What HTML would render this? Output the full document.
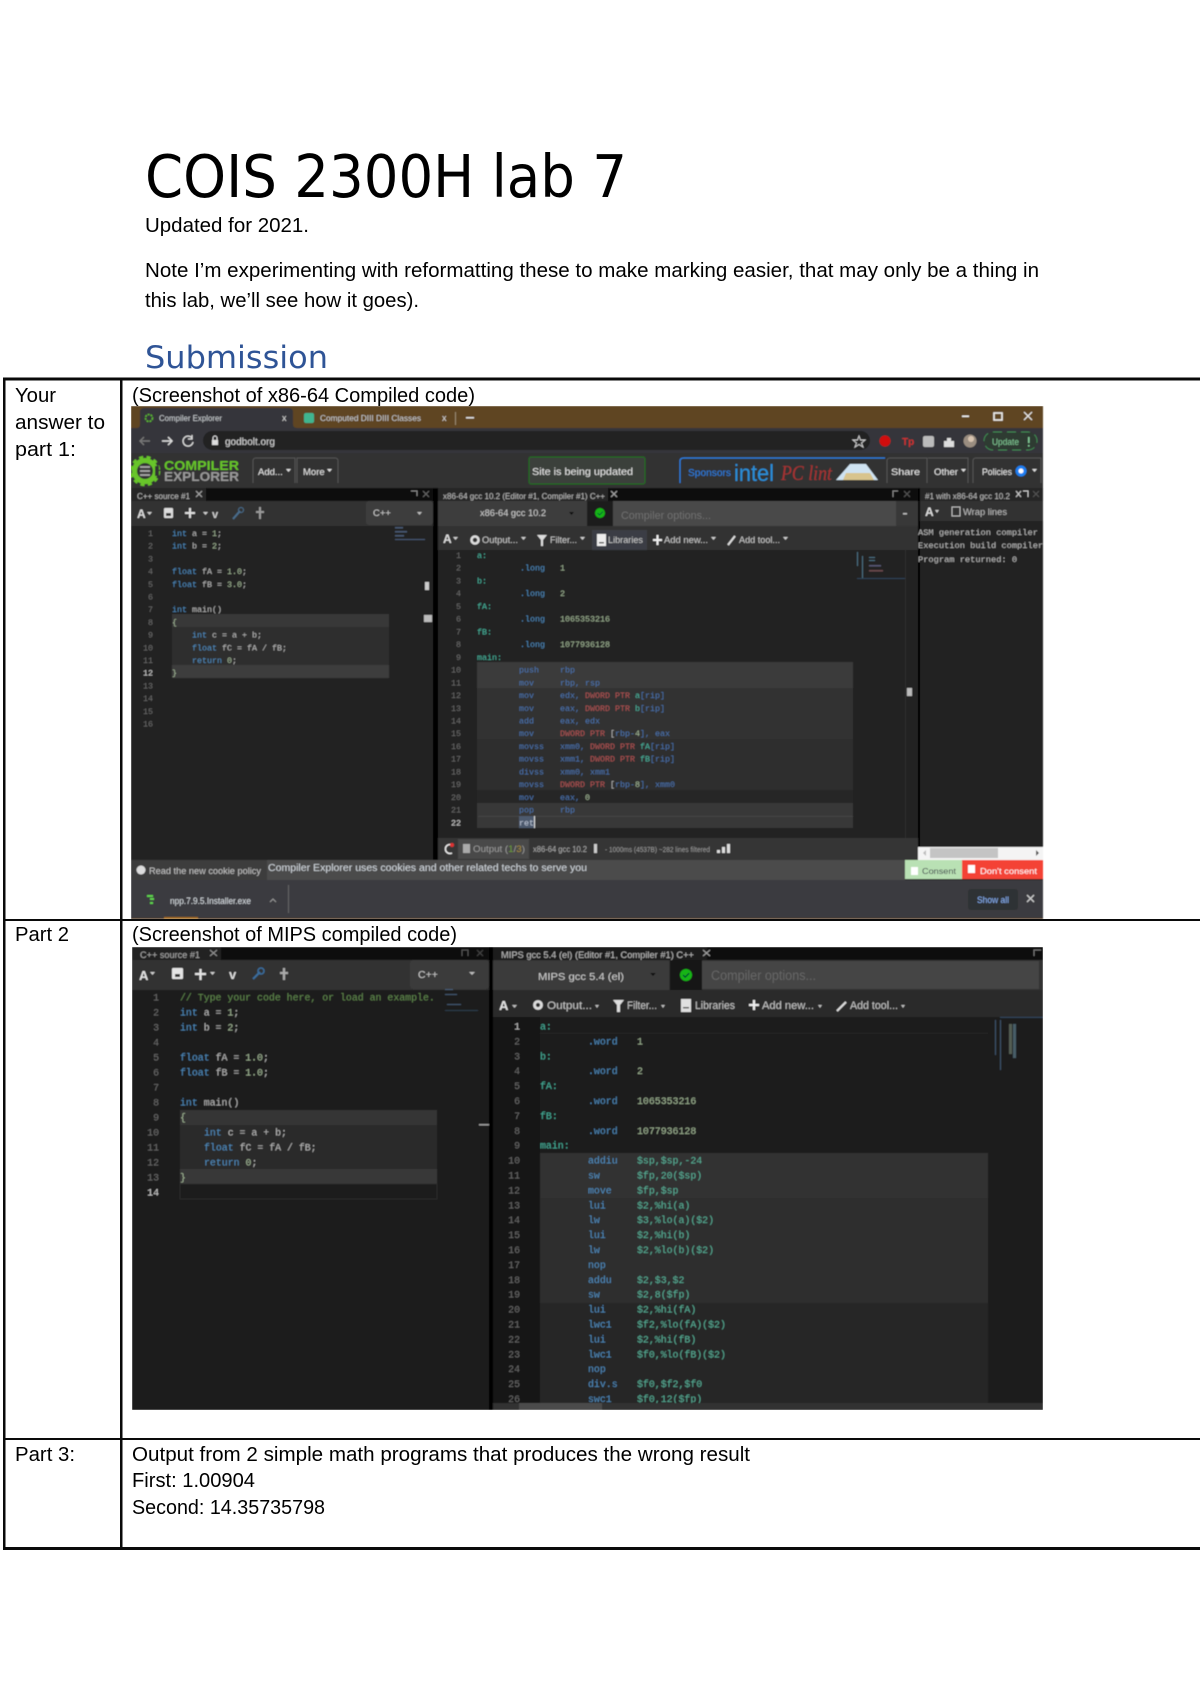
<!DOCTYPE html>
<html lang="en"><head><meta charset="utf-8"><title>COIS 2300H lab 7</title>
<style>
html,body{margin:0;padding:0;background:#fff}
svg{display:block}
.s{font-family:"Liberation Sans",sans-serif}
.d{font-family:"DejaVu Sans",sans-serif}
.m{font-family:"Liberation Mono",monospace;opacity:.85}
.b{font-size:20px;fill:#000}
.c1{font-size:8.33px}
.c2{font-size:9.9px}
.k{fill:#569cd6}.n{fill:#b5cea8}.t{fill:#cfcfcf}.l{fill:#4ec9b0}.r{fill:#c85a5a}.g{fill:#6a9955}.e{text-anchor:end;fill:#777}.e2{text-anchor:end;fill:#eee}.o{fill:#4f7fc4}
.w{fill:#ddd}
</style></head>
<body>
<svg xmlns="http://www.w3.org/2000/svg" width="1200" height="1698" viewBox="0 0 1200 1698">
<defs>
<filter id="bl" x="0" y="0" width="100%" height="100%"><feGaussianBlur stdDeviation="0.6"/></filter>
<clipPath id="c3"><rect x="918" y="488" width="125" height="360"/></clipPath>
<clipPath id="c4"><rect x="493" y="1017" width="550" height="386"/></clipPath>
</defs>
<rect width="1200" height="1698" fill="#fff"/>

<!-- Document text -->
<text class="d" x="145" y="197" font-size="59" textLength="482" lengthAdjust="spacingAndGlyphs" fill="#000">COIS 2300H lab 7</text>
<text class="s b" x="145" y="232" textLength="164" lengthAdjust="spacingAndGlyphs">Updated for 2021.</text>
<text class="s b" x="145" y="277" textLength="894" lengthAdjust="spacingAndGlyphs">Note I’m experimenting with reformatting these to make marking easier, that may only be a thing in</text>
<text class="s b" x="145" y="307" textLength="274" lengthAdjust="spacingAndGlyphs">this lab, we’ll see how it goes).</text>
<text class="d" x="145" y="368" font-size="31" textLength="183" lengthAdjust="spacingAndGlyphs" fill="#2f5496">Submission</text>

<!-- Table -->
<g fill="#0a0a0a">
<rect x="3" y="377.5" width="1197" height="3"/>
<rect x="3" y="919" width="1197" height="2"/>
<rect x="3" y="1438" width="1197" height="2"/>
<rect x="3" y="1547" width="1197" height="3"/>
<rect x="3" y="378" width="2.5" height="1171"/>
<rect x="120" y="378" width="2.5" height="1171"/>
</g>
<text class="s b" x="15" y="402" textLength="41" lengthAdjust="spacingAndGlyphs">Your</text>
<text class="s b" x="15" y="429" textLength="90" lengthAdjust="spacingAndGlyphs">answer to</text>
<text class="s b" x="15" y="456" textLength="61" lengthAdjust="spacingAndGlyphs">part 1:</text>
<text class="s b" x="132" y="402" textLength="343" lengthAdjust="spacingAndGlyphs">(Screenshot of x86-64 Compiled code)</text>
<text class="s b" x="15" y="941" textLength="54" lengthAdjust="spacingAndGlyphs">Part 2</text>
<text class="s b" x="132" y="941" textLength="325" lengthAdjust="spacingAndGlyphs">(Screenshot of MIPS compiled code)</text>
<text class="s b" x="15" y="1461" textLength="60" lengthAdjust="spacingAndGlyphs">Part 3:</text>
<text class="s b" x="132" y="1461" textLength="618" lengthAdjust="spacingAndGlyphs">Output from 2 simple math programs that produces the wrong result</text>
<text class="s b" x="132" y="1487" textLength="123" lengthAdjust="spacingAndGlyphs">First: 1.00904</text>
<text class="s b" x="132" y="1514" textLength="193" lengthAdjust="spacingAndGlyphs">Second: 14.35735798</text>

<!-- Screenshot 1 -->
<g filter="url(#bl)">
<rect x="131" y="406" width="912" height="513" fill="#222"/>
<rect x="131" y="406" width="912" height="22" fill="#5e4524"/>
<path d="M137 428 Q140 428 140 424 L140 412 Q140 408 145 408 L288 408 Q293 408 293 412 L293 424 Q293 428 297 428Z" fill="#35363a"/>
<circle cx="149" cy="418" r="3.5" fill="none" stroke="#5cb531" stroke-width="1.6" stroke-dasharray="2 1"/>
<text class="s" x="159" y="421" font-size="8.5" fill="#c8ccd0" textLength="63" lengthAdjust="spacingAndGlyphs">Compiler Explorer</text>
<text class="s" x="282" y="421" font-size="9" fill="#ddd">x</text>
<rect x="304" y="413" width="10" height="10" rx="2" fill="#3fb58f"/>
<text class="s" x="320" y="421" font-size="8.5" fill="#c8ccd0" textLength="101" lengthAdjust="spacingAndGlyphs">Computed DIII DIII Classes</text>
<text class="s" x="442" y="421" font-size="9" fill="#ddd">x</text>
<rect x="455" y="412" width="1" height="13" fill="#9a8a70"/>
<rect x="466" y="417" width="8" height="1.5" fill="#ddd"/>
<rect x="962" y="415.5" width="7" height="1.6" fill="#eee"/>
<rect x="994" y="413" width="8" height="7" fill="none" stroke="#eee" stroke-width="1.6"/>
<path d="M1024 412 L1032 420 M1032 412 L1024 420" stroke="#eee" stroke-width="1.2"/>

<rect x="131" y="428" width="912" height="25" fill="#35363a"/>
<rect x="203" y="431" width="667" height="19" rx="9.5" fill="#202124"/>
<path d="M140 441 H150 M144 437 L140 441 L144 445" stroke="#777" stroke-width="1.4" fill="none"/>
<path d="M162 441 H172 M168 437 L172 441 L168 445" stroke="#ddd" stroke-width="1.4" fill="none"/>
<path d="M192 438 A5 5 0 1 0 193 442 M192 435 V439 H188" stroke="#ddd" stroke-width="1.3" fill="none"/>
<rect x="212" y="440" width="6" height="5" fill="#ddd"/><path d="M213 440 V438 A2 2 0 0 1 217 438 V440" stroke="#ddd" fill="none"/>
<text class="s" x="225" y="445" font-size="10" fill="#d8d8d8" textLength="50" lengthAdjust="spacingAndGlyphs">godbolt.org</text>
<path d="M859 436 L860.5 440 L865 440 L861.5 443 L863 447 L859 444.5 L855 447 L856.500 443 L853 440 L857.500 440Z" fill="none" stroke="#ccc" stroke-width="1"/>
<circle cx="885" cy="441" r="5.500" fill="#d01010"/>
<text class="s" x="902" y="445" font-size="10" font-weight="bold" fill="#d03030">Tp</text>
<rect x="923" y="436" width="11" height="11" rx="2" fill="#bbb"/>
<path d="M944 441 h3 v-3 h4 v3 h3 v6 h-10z" fill="#ddd"/>
<circle cx="970" cy="441" r="6.500" fill="#9a8d80"/><circle cx="971" cy="439" r="3" fill="#d8c4b0"/>
<rect x="984" y="432" width="53" height="18" rx="9" fill="#2e3a32" stroke="#3f8a52" stroke-dasharray="9 5"/>
<text class="s" x="992" y="445" font-size="9" fill="#81c995" textLength="27" lengthAdjust="spacingAndGlyphs">Update</text>
<rect x="1028" y="437" width="1.6" height="6" fill="#81c995"/><rect x="1028" y="445" width="1.6" height="1.6" fill="#81c995"/>

<rect x="131" y="453" width="912" height="35" fill="#333"/>
<circle cx="145" cy="471" r="10.500" fill="none" stroke="#67c52a" stroke-width="5"/>
<circle cx="145" cy="471" r="14" fill="none" stroke="#67c52a" stroke-width="2.500" stroke-dasharray="4 3.500"/>
<path d="M140 467 h10 M140 471 h10 M140 475 h10" stroke="#aaa" stroke-width="1.800"/>
<path d="M155 466 h4 v10 h-4z" fill="#333"/>
<text class="s" x="164" y="470" font-size="13" font-weight="bold" fill="#67c52a" textLength="75" lengthAdjust="spacingAndGlyphs">COMPILER</text>
<text class="s" x="164" y="481" font-size="13" font-weight="bold" fill="#999" textLength="75" lengthAdjust="spacingAndGlyphs">EXPLORER</text>
<path d="M253 483 V461 Q253 458 256 458 H295 V483 M297 483 V458 H335 Q338 458 338 461 V483" fill="none" stroke="#555"/>
<text class="s" x="258" y="475" font-size="9.500" fill="#e8e8e8">Add...</text>
<path d="M286 469 h5 l-2.500 3z M327 469 h5 l-2.500 3z" fill="#ddd"/>
<text class="s" x="303" y="475" font-size="9.500" fill="#e8e8e8">More</text>
<rect x="529" y="457" width="116" height="27" rx="2" fill="#3a403a" stroke="#1f6f1f"/>
<text class="s" x="532" y="475" font-size="10.500" fill="#e6e6e6" textLength="101" lengthAdjust="spacingAndGlyphs">Site is being updated</text>
<path d="M680 483 V461 Q680 458 684 458 H885" fill="none" stroke="#2a7fe0" stroke-width="1.200"/>
<text class="s" x="688" y="476" font-size="10" fill="#2a7fe0" textLength="43" lengthAdjust="spacingAndGlyphs">Sponsors</text>
<text class="s" x="734" y="481" font-size="23" fill="#2a8fd8" textLength="40" lengthAdjust="spacingAndGlyphs">intel</text>
<text font-family="Liberation Serif,serif" x="781" y="480" font-size="21" font-style="italic" fill="#a83232" textLength="51" lengthAdjust="spacingAndGlyphs">PC lint</text>
<path d="M836 480 L850 464 H866 L878 480Z" fill="#cfe3f2"/><path d="M843 480 L846 473 H870 L874 480Z" fill="#d8c48e"/>
<path d="M887 483 V461 Q887 458 890 458 H927 V483 M928 458 H968 V483 M973 483 V461 Q973 458 976 458 H1041 V483" fill="none" stroke="#555"/>
<text class="s" x="891" y="475" font-size="9.500" fill="#e8e8e8" textLength="29" lengthAdjust="spacingAndGlyphs">Share</text>
<text class="s" x="934" y="475" font-size="9.500" fill="#e8e8e8" textLength="24" lengthAdjust="spacingAndGlyphs">Other</text>
<path d="M961 469 h5 l-2.500 3z M1032 469 h5 l-2.500 3z" fill="#ddd"/>
<text class="s" x="982" y="475" font-size="9.500" fill="#e8e8e8" textLength="30" lengthAdjust="spacingAndGlyphs">Policies</text>
<circle cx="1021" cy="471" r="5.500" fill="#1e7ff0"/><circle cx="1021" cy="471" r="2.500" fill="#fff"/>

<!-- pane headers -->
<rect x="131" y="488" width="912" height="13" fill="#111"/>
<rect x="131" y="488" width="75" height="13" fill="#262626"/>
<text class="s" x="137" y="499" font-size="8.500" fill="#bbb" textLength="53" lengthAdjust="spacingAndGlyphs">C++ source #1</text>
<path d="M196 491 l6 6 M202 491 l-6 6" stroke="#aaa"/>
<path d="M411 491 h6 v5" stroke="#888" fill="none"/><path d="M423 491 l6 6 M429 491 l-6 6" stroke="#666"/>
<rect x="438" y="488" width="170" height="13" fill="#262626"/>
<text class="s" x="443" y="499" font-size="8.500" fill="#bbb" textLength="162" lengthAdjust="spacingAndGlyphs">x86-64 gcc 10.2 (Editor #1, Compiler #1) C++</text>
<path d="M611 491 l6 6 M617 491 l-6 6" stroke="#aaa"/>
<path d="M893 497 v-6 h5" stroke="#888" fill="none"/><path d="M904 491 l6 6 M910 491 l-6 6" stroke="#555"/>
<rect x="919" y="488" width="124" height="13" fill="#262626"/>
<text class="s" x="925" y="499" font-size="8.500" fill="#bbb" textLength="85" lengthAdjust="spacingAndGlyphs">#1 with x86-64 gcc 10.2</text>
<path d="M1016 491 l5 6 M1021 491 l-5 6 M1023 491 h5 v6" stroke="#ccc" fill="none"/><path d="M1033 491 l6 6 M1039 491 l-6 6" stroke="#555"/>

<!-- left toolbar -->
<rect x="131" y="501" width="302" height="25" fill="#333"/>
<text class="s" x="137" y="518" font-size="12" font-weight="bold" fill="#ddd">A</text><path d="M147 512 h5 l-2.500 3z M203 512 h5 l-2.500 3z" fill="#ccc"/>
<rect x="164" y="508" width="9" height="10" rx="1" fill="#ddd"/><rect x="166" y="513" width="5" height="3" fill="#333"/>
<path d="M185 513 h10 M190 508 v10" stroke="#ddd" stroke-width="2"/>
<text class="s" x="212" y="518" font-size="11" font-weight="bold" fill="#ccc">v</text>
<path d="M233 519 L240 511" stroke="#4a6d8c" stroke-width="2"/><circle cx="241" cy="510" r="2.500" fill="none" stroke="#4a6d8c"/>
<path d="M256 512 h8 M260 507 v12" stroke="#999" stroke-width="2"/>
<rect x="366" y="501" width="67" height="24" rx="3" fill="#3c3c3c"/>
<text class="s" x="373" y="516" font-size="9.500" fill="#ccc">C++</text><path d="M417 512 h5 l-2.500 3z" fill="#bbb"/>

<!-- left code -->
<rect x="131" y="526" width="302" height="334" fill="#222"/>
<rect x="172" y="614" width="217" height="64" fill="#2f2f2f"/>
<rect x="172" y="614" width="217" height="13" fill="#393939"/>
<rect x="172" y="665" width="217" height="13" fill="#3e3e3e"/>
<g fill="#5f7fa8" opacity=".6"><rect x="395" y="527" width="8" height="1.500"/><rect x="395" y="531" width="12" height="1.500"/><rect x="395" y="535" width="9" height="1.500"/><rect x="395" y="539" width="30" height="1"/></g>
<rect x="425" y="582" width="4" height="8" fill="#ccc"/><rect x="424" y="615" width="8" height="7" fill="#bbb"/>
<g class="m c1">
<text class="e" x="153" y="536">1</text><text class="e" x="153" y="548.700">2</text><text class="e" x="153" y="561.400">3</text><text class="e" x="153" y="574.100">4</text><text class="e" x="153" y="586.800">5</text><text class="e" x="153" y="599.500">6</text><text class="e" x="153" y="612.200">7</text><text class="e" x="153" y="624.900">8</text><text class="e" x="153" y="637.600">9</text><text class="e" x="153" y="650.300">10</text><text class="e" x="153" y="663">11</text><text class="e2" x="153" y="675.700">12</text><text class="e" x="153" y="688.400">13</text><text class="e" x="153" y="701.100">14</text><text class="e" x="153" y="713.800">15</text><text class="e" x="153" y="726.500">16</text>
<text x="172" y="536"><tspan class="k">int</tspan><tspan class="t"> a = </tspan><tspan class="n">1</tspan><tspan class="t">;</tspan></text>
<text x="172" y="548.700"><tspan class="k">int</tspan><tspan class="t"> b = </tspan><tspan class="n">2</tspan><tspan class="t">;</tspan></text>
<text x="172" y="574.100"><tspan class="k">float</tspan><tspan class="t"> fA = </tspan><tspan class="n">1.0</tspan><tspan class="t">;</tspan></text>
<text x="172" y="586.800"><tspan class="k">float</tspan><tspan class="t"> fB = </tspan><tspan class="n">3.0</tspan><tspan class="t">;</tspan></text>
<text x="172" y="612.200"><tspan class="k">int</tspan><tspan class="t"> main()</tspan></text>
<text class="n" x="172" y="624.900">{</text>
<text x="192" y="637.600"><tspan class="k">int</tspan><tspan class="t"> c = a + b;</tspan></text>
<text x="192" y="650.300"><tspan class="k">float</tspan><tspan class="t"> fC = fA / fB;</tspan></text>
<text x="192" y="663"><tspan class="k">return</tspan><tspan class="t"> </tspan><tspan class="n">0</tspan><tspan class="t">;</tspan></text>
<text class="n" x="172" y="675.700">}</text>
</g>

<rect x="433" y="488" width="5" height="372" fill="#000"/>

<!-- right pane toolbars -->
<rect x="438" y="501" width="480" height="25" fill="#383838"/>
<rect x="438" y="501" width="149" height="25" fill="#3d3d3d"/>
<text class="s" x="480" y="516" font-size="9" fill="#ccc" textLength="66" lengthAdjust="spacingAndGlyphs">x86-64 gcc 10.2</text>
<path d="M569 512 h5 l-2.500 3z" fill="#111"/>
<rect x="587" y="501" width="26" height="25" fill="#1a1a1a"/>
<circle cx="600" cy="513" r="5" fill="#16b516"/><path d="M597.500 513 l2 2 l3.500 -3.500" stroke="#063" fill="none"/>
<rect x="613" y="501" width="283" height="25" fill="#4a4a4a"/>
<text class="s" x="621" y="519" font-size="11" fill="#6e6e6e" textLength="90" lengthAdjust="spacingAndGlyphs">Compiler options...</text>
<rect x="903" y="513" width="4" height="1.500" fill="#bbb"/>
<rect x="438" y="526" width="480" height="24" fill="#333"/>
<text class="s" x="443" y="543" font-size="12" font-weight="bold" fill="#ddd">A</text>
<path d="M453 537 h5 l-2.500 3z M521 537 h5 l-2.500 3z M580 537 h5 l-2.500 3z M711 537 h5 l-2.500 3z M783 537 h5 l-2.500 3z" fill="#ccc"/>
<circle cx="475" cy="540" r="3.500" fill="none" stroke="#ddd" stroke-width="2.500"/>
<text class="s" x="482" y="543" font-size="9.500" fill="#c8c8c8" textLength="36" lengthAdjust="spacingAndGlyphs">Output...</text>
<path d="M537 535 h10 l-4 5 v6 h-2 v-6z" fill="#ddd"/>
<text class="s" x="550" y="543" font-size="9.500" fill="#c8c8c8" textLength="27" lengthAdjust="spacingAndGlyphs">Filter...</text>
<rect x="592" y="530" width="55" height="20" fill="#3a3d44"/>
<rect x="597" y="534" width="9" height="12" fill="#eee"/><rect x="599" y="542" width="5" height="1.500" fill="#555"/>
<text class="s" x="608" y="543" font-size="9.500" fill="#c8c8c8" textLength="35" lengthAdjust="spacingAndGlyphs">Libraries</text>
<path d="M653 540 h9 M657.500 535 v10" stroke="#eee" stroke-width="2"/>
<text class="s" x="664" y="543" font-size="9.500" fill="#c8c8c8" textLength="44" lengthAdjust="spacingAndGlyphs">Add new...</text>
<path d="M728 545 l7 -9" stroke="#ddd" stroke-width="2"/>
<text class="s" x="739" y="543" font-size="9.500" fill="#c8c8c8" textLength="41" lengthAdjust="spacingAndGlyphs">Add tool...</text>

<!-- asm code -->
<rect x="438" y="550" width="480" height="288" fill="#222"/>
<rect x="477" y="662" width="376" height="26" fill="#3a3a3a"/>
<rect x="477" y="688" width="376" height="51" fill="#333"/>
<rect x="477" y="739" width="376" height="51" fill="#2e2e2e"/>
<rect x="477" y="790" width="376" height="13" fill="#282828"/>
<rect x="477" y="803" width="376" height="25" fill="#383838"/>
<rect x="478" y="816" width="375" height="0.800" fill="#4a4a4a"/>
<rect x="519" y="816" width="15" height="12" fill="#4e5a6e"/><rect x="534" y="816" width="1" height="12" fill="#ddd"/>
<rect x="905" y="550" width="1" height="288" fill="#333"/>
<g fill="#5f8fa8" opacity=".7"><rect x="857" y="552" width="1" height="14"/><rect x="862" y="556" width="1" height="22"/><rect x="869" y="557" width="6" height="1"/><rect x="869" y="560" width="6" height="1"/><rect x="869" y="565" width="12" height="1.500" fill="#6a6a90"/><rect x="869" y="570" width="14" height="1.500" fill="#8a5a60"/><rect x="857" y="578" width="48" height="1" fill="#34506c"/></g>
<rect x="907" y="688" width="5" height="8" fill="#bbb"/>
<g class="m c1">
<text class="e" x="461" y="558">1</text><text class="e" x="461" y="570.700">2</text><text class="e" x="461" y="583.500">3</text><text class="e" x="461" y="596.200">4</text><text class="e" x="461" y="608.900">5</text><text class="e" x="461" y="621.600">6</text><text class="e" x="461" y="634.400">7</text><text class="e" x="461" y="647.100">8</text><text class="e" x="461" y="659.800">9</text><text class="e" x="461" y="672.600">10</text><text class="e" x="461" y="685.300">11</text><text class="e" x="461" y="698">12</text><text class="e" x="461" y="710.800">13</text><text class="e" x="461" y="723.500">14</text><text class="e" x="461" y="736.200">15</text><text class="e" x="461" y="749">16</text><text class="e" x="461" y="761.700">17</text><text class="e" x="461" y="774.400">18</text><text class="e" x="461" y="787.100">19</text><text class="e" x="461" y="799.900">20</text><text class="e" x="461" y="812.600">21</text><text class="e2" x="461" y="825.300">22</text>
<text class="l" x="477" y="558">a:</text><text class="k" x="520" y="570.700">.long</text><text class="n" x="560" y="570.700">1</text>
<text class="l" x="477" y="583.500">b:</text><text class="k" x="520" y="596.200">.long</text><text class="n" x="560" y="596.200">2</text>
<text class="l" x="477" y="608.900">fA:</text><text class="k" x="520" y="621.600">.long</text><text class="n" x="560" y="621.600">1065353216</text>
<text class="l" x="477" y="634.400">fB:</text><text class="k" x="520" y="647.100">.long</text><text class="n" x="560" y="647.100">1077936128</text>
<text class="l" x="477" y="659.800">main:</text>
<g class="o"><text x="519" y="672.600">push</text><text x="519" y="685.300">mov</text><text x="519" y="698">mov</text><text x="519" y="710.800">mov</text><text x="519" y="723.500">add</text><text x="519" y="736.200">mov</text><text x="519" y="749">movss</text><text x="519" y="761.700">movss</text><text x="519" y="774.400">divss</text><text x="519" y="787.100">movss</text><text x="519" y="799.900">mov</text><text x="519" y="812.600">pop</text><text x="519" y="825.300" fill="#cfd8e8">ret</text>
<text x="560" y="672.600">rbp</text>
<text x="560" y="685.300">rbp, rsp</text>
<text x="560" y="698">edx, <tspan class="r">DWORD PTR</tspan> <tspan class="l">a</tspan>[rip]</text>
<text x="560" y="710.800">eax, <tspan class="r">DWORD PTR</tspan> <tspan class="l">b</tspan>[rip]</text>
<text x="560" y="723.500">eax, edx</text>
<text x="560" y="736.200"><tspan class="r">DWORD PTR</tspan> <tspan class="t">[</tspan>rbp-<tspan class="n">4</tspan>], eax</text>
<text x="560" y="749">xmm0, <tspan class="r">DWORD PTR</tspan> <tspan class="l">fA</tspan>[rip]</text>
<text x="560" y="761.700">xmm1, <tspan class="r">DWORD PTR</tspan> <tspan class="l">fB</tspan>[rip]</text>
<text x="560" y="774.400">xmm0, xmm1</text>
<text x="560" y="787.100"><tspan class="r">DWORD PTR</tspan> <tspan class="t">[</tspan>rbp-<tspan class="n">8</tspan>], xmm0</text>
<text x="560" y="799.900">eax, <tspan class="n">0</tspan></text>
<text x="560" y="812.600">rbp</text></g>
</g>

<!-- status bar -->
<rect x="438" y="838" width="480" height="22" fill="#363636"/>
<path d="M452 845 A4.500 4.500 0 1 0 452 853" fill="none" stroke="#eee" stroke-width="1.500"/><circle cx="452" cy="845" r="2" fill="#d33"/>
<rect x="458" y="839" width="71" height="20" fill="#4a4a4a"/>
<rect x="463" y="844" width="7" height="9" fill="#aaa"/>
<text class="s" x="473" y="852" font-size="9" fill="#999" textLength="52" lengthAdjust="spacingAndGlyphs">Output (<tspan fill="#6a9a3a">1</tspan>/<tspan fill="#a58a3a">3</tspan>)</text>
<text class="s" x="533" y="852" font-size="8.500" fill="#aaa" textLength="54" lengthAdjust="spacingAndGlyphs">x86-64 gcc 10.2</text>
<rect x="594" y="844" width="3" height="9" fill="#ccc"/>
<text class="s" x="605" y="852" font-size="7.500" fill="#999" textLength="105" lengthAdjust="spacingAndGlyphs">- 1000ms (4537B) ~282 lines filtered</text>
<path d="M717 853 h3 v-3 h-3z M722 853 h3 v-6 h-3z M727 853 h3 v-9 h-3z" fill="#ddd"/>

<!-- third pane -->
<rect x="918" y="488" width="2" height="372" fill="#000"/>
<rect x="920" y="501" width="123" height="20" fill="#333"/>
<rect x="920" y="521" width="123" height="326" fill="#212121"/>
<text class="s" x="925" y="516" font-size="12" font-weight="bold" fill="#ddd">A</text><path d="M935 510 h4 l-2 3z" fill="#ccc"/>
<rect x="952" y="507" width="8" height="9" fill="none" stroke="#bbb"/>
<text class="s" x="963" y="515" font-size="9" fill="#bbb" textLength="44" lengthAdjust="spacingAndGlyphs">Wrap lines</text>
<g class="m" font-size="8.700" fill="#d4d4d4" clip-path="url(#c3)">
<text x="918" y="535">ASM generation compiler returned: 0</text>
<text x="918" y="548">Execution build compiler returned: 0</text>
<text x="918" y="562">Program returned: 0</text>
</g>
<rect x="918" y="847" width="125" height="13" fill="#f4f4f4"/>
<rect x="930" y="848" width="68" height="10" fill="#c4c4c4"/>
<path d="M926 850 v6 l-3 -3z" fill="#bbb"/><path d="M1036 850 v6 l3 -3z" fill="#555"/>

<!-- cookie bar -->
<rect x="131" y="860" width="136" height="20" fill="#3c3c3c"/>
<rect x="267" y="860" width="638" height="20" fill="#4b4b4b"/>
<circle cx="141" cy="870" r="4.500" fill="#ddd"/>
<text class="s" x="149" y="874" font-size="8.800" fill="#c4c4c4" textLength="112" lengthAdjust="spacingAndGlyphs">Read the new cookie policy</text>
<text class="s" x="268" y="871" font-size="9.800" fill="#d0d6dc" textLength="319" lengthAdjust="spacingAndGlyphs">Compiler Explorer uses cookies and other related techs to serve you</text>
<rect x="905" y="860" width="57" height="19" fill="#b9e1b4"/>
<rect x="962" y="860" width="81" height="19" fill="#f44336"/>
<rect x="911" y="867" width="7" height="8" fill="#fff"/>
<text class="s" x="922" y="874" font-size="8.500" fill="#334" textLength="34" lengthAdjust="spacingAndGlyphs">Consent</text>
<rect x="968" y="865" width="7" height="8" fill="#fff"/>
<text class="s" x="980" y="874" font-size="8.500" fill="#fff" textLength="57" lengthAdjust="spacingAndGlyphs">Don't consent</text>

<!-- download bar -->
<rect x="131" y="880" width="912" height="38" fill="#3a3b3f"/>
<rect x="131" y="918" width="912" height="1" fill="#5a4020"/>
<rect x="164" y="917" width="34" height="2" fill="#a06a20"/>
<path d="M147 896 h6 M150 899 h4 M150 903 h3" stroke="#5fd14b" stroke-width="2"/>
<text class="s" x="170" y="904" font-size="9.500" fill="#d8dde2" textLength="81" lengthAdjust="spacingAndGlyphs">npp.7.9.5.Installer.exe</text>
<path d="M270 902 l3 -3 l3 3" stroke="#999" fill="none"/>
<rect x="288" y="885" width="1" height="28" fill="#666"/>
<rect x="968" y="889" width="50" height="21" rx="3" fill="#2f3034"/>
<text class="s" x="977" y="903" font-size="9.500" fill="#8ab4f8" textLength="32" lengthAdjust="spacingAndGlyphs">Show all</text>
<path d="M1027 895 l7 7 M1034 895 l-7 7" stroke="#ccc" stroke-width="1.300"/>
</g>

<!-- Screenshot 2 -->
<g filter="url(#bl)">
<rect x="132" y="947" width="911" height="463" fill="#1e1e1e"/>
<rect x="132" y="947" width="911" height="13" fill="#0e0e0e"/>
<rect x="132" y="947" width="89" height="13" fill="#222"/>
<text class="s" x="140" y="958" font-size="9" fill="#aaa" textLength="60" lengthAdjust="spacingAndGlyphs">C++ source #1</text>
<path d="M210 950 l7 6 M217 950 l-7 6" stroke="#999"/>
<path d="M462 956 v-6 h6 v6" stroke="#555" fill="none"/><path d="M477 950 l6 6 M483 950 l-6 6" stroke="#444"/>
<rect x="132" y="960" width="357" height="30" fill="#303030"/>
<text class="s" x="139" y="980" font-size="13" font-weight="bold" fill="#e4e4e4">A</text><path d="M150 972 h5 l-2.500 3z M210 972 h5 l-2.500 3z" fill="#ccc"/>
<rect x="172" y="968" width="11" height="11" rx="1" fill="#e4e4e4"/><rect x="175" y="974" width="5" height="3" fill="#303030"/>
<path d="M195 974 h11 M200.500 969 v11" stroke="#e4e4e4" stroke-width="2.300"/>
<text class="s" x="229" y="979" font-size="13" font-weight="bold" fill="#ddd">v</text>
<path d="M253 979 L260 972" stroke="#3a6d9c" stroke-width="2"/><circle cx="261" cy="971" r="3" fill="none" stroke="#3a6d9c" stroke-width="1.500"/>
<path d="M280 973 h8 M284 968 v12" stroke="#aaa" stroke-width="2.300"/>
<rect x="410" y="960" width="79" height="29" rx="3" fill="#3a3a3a"/>
<text class="s" x="418" y="978" font-size="10.500" fill="#ccc">C++</text><path d="M469 972 h6 l-3 3z" fill="#bbb"/>

<rect x="132" y="990" width="357" height="420" fill="#1f1f1f"/>
<rect x="437" y="990" width="52" height="420" fill="#1a1a1a"/>
<rect x="180" y="1110" width="257" height="74" fill="#2b2b2b"/>
<rect x="180" y="1110" width="257" height="15" fill="#353535"/>
<rect x="180" y="1169" width="257" height="15" fill="#383838"/>
<rect x="180" y="1184" width="257" height="15" fill="none" stroke="#2a2a2a"/>
<g fill="#5f7fa8" opacity=".6"><rect x="445" y="989" width="8" height="1"/><rect x="445" y="994" width="12" height="1"/><rect x="447" y="1004" width="14" height="1"/><rect x="445" y="1010" width="33" height="1" fill="#34506c"/></g>
<rect x="479" y="1124" width="10" height="1.500" fill="#999"/>
<g class="m c2">
<text class="e" x="159" y="1000.500">1</text><text class="e" x="159" y="1015.500">2</text><text class="e" x="159" y="1030.500">3</text><text class="e" x="159" y="1045.500">4</text><text class="e" x="159" y="1060.500">5</text><text class="e" x="159" y="1075.500">6</text><text class="e" x="159" y="1090.500">7</text><text class="e" x="159" y="1105.500">8</text><text class="e" x="159" y="1120.500">9</text><text class="e" x="159" y="1135.500">10</text><text class="e" x="159" y="1150.500">11</text><text class="e" x="159" y="1165.500">12</text><text class="e" x="159" y="1180.500">13</text><text class="e2" x="159" y="1195.500">14</text>
<text class="g" x="180" y="1000.500">// Type your code here, or load an example.</text>
<text x="180" y="1015.500"><tspan class="k">int</tspan><tspan class="t"> a = </tspan><tspan class="n">1</tspan><tspan class="t">;</tspan></text>
<text x="180" y="1030.500"><tspan class="k">int</tspan><tspan class="t"> b = </tspan><tspan class="n">2</tspan><tspan class="t">;</tspan></text>
<text x="180" y="1060.500"><tspan class="k">float</tspan><tspan class="t"> fA = </tspan><tspan class="n">1.0</tspan><tspan class="t">;</tspan></text>
<text x="180" y="1075.500"><tspan class="k">float</tspan><tspan class="t"> fB = </tspan><tspan class="n">1.0</tspan><tspan class="t">;</tspan></text>
<text x="180" y="1105.500"><tspan class="k">int</tspan><tspan class="t"> main()</tspan></text>
<text class="n" x="180" y="1120.500">{</text>
<text x="204" y="1135.500"><tspan class="k">int</tspan><tspan class="t"> c = a + b;</tspan></text>
<text x="204" y="1150.500"><tspan class="k">float</tspan><tspan class="t"> fC = fA / fB;</tspan></text>
<text x="204" y="1165.500"><tspan class="k">return</tspan><tspan class="t"> </tspan><tspan class="n">0</tspan><tspan class="t">;</tspan></text>
<text class="n" x="180" y="1180.500">}</text>
</g>
<rect x="489" y="947" width="4" height="463" fill="#000"/>

<rect x="493" y="947" width="214" height="13" fill="#1e1e1e"/>
<text class="s" x="501" y="958" font-size="9.500" fill="#bbb" textLength="193" lengthAdjust="spacingAndGlyphs">MIPS gcc 5.4 (el) (Editor #1, Compiler #1) C++</text>
<path d="M703 950 l7 6 M710 950 l-7 6" stroke="#aaa"/>
<path d="M1034 956 v-6 h7" stroke="#777" fill="none"/>
<rect x="493" y="960" width="550" height="30" fill="#313131"/>
<rect x="493" y="961" width="176" height="29" fill="#3a3a3a"/>
<text class="s" x="538" y="980" font-size="10" fill="#ccc" textLength="86" lengthAdjust="spacingAndGlyphs">MIPS gcc 5.4 (el)</text>
<path d="M650 973 h6 l-3 3z" fill="#111"/>
<rect x="670" y="960" width="32" height="30" fill="#131313"/>
<circle cx="686" cy="975" r="6" fill="#16b516"/><path d="M683 975 l2.200 2.200 l4 -4" stroke="#033" fill="none" stroke-width="1.200"/>
<rect x="702" y="961" width="337" height="28" fill="#444"/>
<text class="s" x="711" y="980" font-size="13.500" fill="#666" textLength="105" lengthAdjust="spacingAndGlyphs">Compiler options...</text>
<rect x="493" y="990" width="550" height="27" fill="#2c2c2c"/>
<text class="s" x="499" y="1010" font-size="13" font-weight="bold" fill="#e4e4e4">A</text>
<path d="M512 1005 h5 l-2.500 3z M595 1005 h4 l-2 3z M661 1005 h4 l-2 3z M818 1005 h4 l-2 3z M901 1005 h4 l-2 3z" fill="#bbb"/>
<circle cx="538" cy="1005" r="3.500" fill="none" stroke="#ddd" stroke-width="2.800"/>
<text class="s" x="547" y="1009" font-size="11" fill="#c4c4c4" textLength="45" lengthAdjust="spacingAndGlyphs">Output...</text>
<path d="M613 1000 h11 l-4 5 v7 h-3 v-7z" fill="#ddd"/>
<text class="s" x="627" y="1009" font-size="11" fill="#c4c4c4" textLength="30" lengthAdjust="spacingAndGlyphs">Filter...</text>
<rect x="681" y="999" width="10" height="13" fill="#e0e0e0"/><rect x="683" y="1007" width="6" height="1.500" fill="#555"/>
<text class="s" x="695" y="1009" font-size="11" fill="#c4c4c4" textLength="40" lengthAdjust="spacingAndGlyphs">Libraries</text>
<path d="M749 1005 h10 M754 1000 v10" stroke="#eee" stroke-width="2.300"/>
<text class="s" x="762" y="1009" font-size="11" fill="#c4c4c4" textLength="52" lengthAdjust="spacingAndGlyphs">Add new...</text>
<path d="M837 1011 l9 -9" stroke="#ddd" stroke-width="2"/>
<text class="s" x="850" y="1009" font-size="11" fill="#c4c4c4" textLength="48" lengthAdjust="spacingAndGlyphs">Add tool...</text>

<rect x="493" y="1017" width="550" height="393" fill="#1c1c1c"/>
<rect x="493" y="1017" width="47" height="393" fill="#181818"/>
<rect x="988" y="1017" width="55" height="393" fill="#1a1a1a"/>
<rect x="540" y="1033" width="448" height="0.800" fill="#2a2a2a"/>
<rect x="540" y="1153" width="448" height="150" fill="#2e2e2e"/>
<rect x="540" y="1153" width="448" height="45" fill="#333"/>
<rect x="540" y="1303" width="448" height="100" fill="#282828"/>
<g fill="#4a6a8c" opacity=".7"><rect x="995" y="1020" width="1" height="35"/><rect x="1000" y="1020" width="1" height="50"/><rect x="1009" y="1024" width="3" height="30" fill="#6a7a6a"/><rect x="1013" y="1024" width="3" height="34" fill="#5a7a8a"/></g>
<rect x="1000" y="1017" width="43" height="0.800" fill="#34506c"/>
<g class="m c2" clip-path="url(#c4)">
<text class="e" x="520" y="1029.500" style="fill:#ddd">1</text><text class="e" x="520" y="1044.400">2</text><text class="e" x="520" y="1059.300">3</text><text class="e" x="520" y="1074.200">4</text><text class="e" x="520" y="1089.100">5</text><text class="e" x="520" y="1104">6</text><text class="e" x="520" y="1118.900">7</text><text class="e" x="520" y="1133.800">8</text><text class="e" x="520" y="1148.700">9</text><text class="e" x="520" y="1163.600">10</text><text class="e" x="520" y="1178.500">11</text><text class="e" x="520" y="1193.400">12</text><text class="e" x="520" y="1208.300">13</text><text class="e" x="520" y="1223.200">14</text><text class="e" x="520" y="1238.100">15</text><text class="e" x="520" y="1253">16</text><text class="e" x="520" y="1267.900">17</text><text class="e" x="520" y="1282.800">18</text><text class="e" x="520" y="1297.700">19</text><text class="e" x="520" y="1312.600">20</text><text class="e" x="520" y="1327.500">21</text><text class="e" x="520" y="1342.400">22</text><text class="e" x="520" y="1357.300">23</text><text class="e" x="520" y="1372.200">24</text><text class="e" x="520" y="1387.100">25</text><text class="e" x="520" y="1402">26</text>
<text class="l" x="540" y="1029.500">a:</text><text class="k" x="588" y="1044.400">.word</text><text class="n" x="637" y="1044.400">1</text>
<text class="l" x="540" y="1059.300">b:</text><text class="k" x="588" y="1074.200">.word</text><text class="n" x="637" y="1074.200">2</text>
<text class="l" x="540" y="1089.100">fA:</text><text class="k" x="588" y="1104">.word</text><text class="n" x="637" y="1104">1065353216</text>
<text class="l" x="540" y="1118.900">fB:</text><text class="k" x="588" y="1133.800">.word</text><text class="n" x="637" y="1133.800">1077936128</text>
<text class="l" x="540" y="1148.700">main:</text>
<g class="k"><text x="588" y="1163.600">addiu</text><text x="588" y="1178.500">sw</text><text x="588" y="1193.400">move</text><text x="588" y="1208.300">lui</text><text x="588" y="1223.200">lw</text><text x="588" y="1238.100">lui</text><text x="588" y="1253">lw</text><text x="588" y="1267.900">nop</text><text x="588" y="1282.800">addu</text><text x="588" y="1297.700">sw</text><text x="588" y="1312.600">lui</text><text x="588" y="1327.500">lwc1</text><text x="588" y="1342.400">lui</text><text x="588" y="1357.300">lwc1</text><text x="588" y="1372.200">nop</text><text x="588" y="1387.100">div.s</text><text x="588" y="1402">swc1</text></g>
<g fill="#5fc4a8"><text x="637" y="1163.600">$sp,$sp,-24</text><text x="637" y="1178.500">$fp,20($sp)</text><text x="637" y="1193.400">$fp,$sp</text><text x="637" y="1208.300">$2,%hi(a)</text><text x="637" y="1223.200">$3,%lo(a)($2)</text><text x="637" y="1238.100">$2,%hi(b)</text><text x="637" y="1253">$2,%lo(b)($2)</text><text x="637" y="1282.800">$2,$3,$2</text><text x="637" y="1297.700">$2,8($fp)</text><text x="637" y="1312.600">$2,%hi(fA)</text><text x="637" y="1327.500">$f2,%lo(fA)($2)</text><text x="637" y="1342.400">$2,%hi(fB)</text><text x="637" y="1357.300">$f0,%lo(fB)($2)</text><text x="637" y="1387.100">$f0,$f2,$f0</text><text x="637" y="1402">$f0,12($fp)</text></g>
</g>
<rect x="493" y="1403" width="550" height="7" fill="#333"/>
<rect x="519" y="1403" width="83" height="7" fill="#4c4c4c"/>
</g>
</svg>
</body></html>
